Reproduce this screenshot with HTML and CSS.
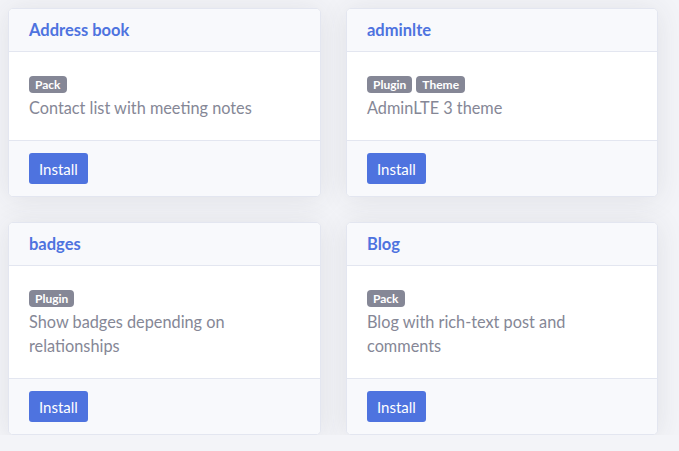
FILE: index.html
```html
<!DOCTYPE html>
<html lang="en">
<head>
  <meta charset="UTF-8" />
  <title>Extensions</title>
  <link rel="stylesheet" href="styles.css">
</head>
<body>

  <div class="grid">
    <!-- Address book -->
    <div class="card">
      <div class="card-header">Address book</div>
      <div class="card-body">
        <div class="tags"><span class="badge">Pack</span></div>
        <p>Contact list with meeting notes</p>
      </div>
      <div class="card-footer"><button class="btn">Install</button></div>
    </div>

    <!-- adminlte -->
    <div class="card">
      <div class="card-header">adminlte</div>
      <div class="card-body">
        <div class="tags"><span class="badge">Plugin</span><span class="badge">Theme</span></div>
        <p>AdminLTE 3 theme</p>
      </div>
      <div class="card-footer"><button class="btn">Install</button></div>
    </div>

    <!-- badges -->
    <div class="card">
      <div class="card-header">badges</div>
      <div class="card-body">
        <div class="tags"><span class="badge">Plugin</span></div>
        <p>Show badges depending on relationships</p>
      </div>
      <div class="card-footer"><button class="btn">Install</button></div>
    </div>

    <!-- Blog -->
    <div class="card">
      <div class="card-header">Blog</div>
      <div class="card-body">
        <div class="tags"><span class="badge">Pack</span></div>
        <p>Blog with rich-text post and comments</p>
      </div>
      <div class="card-footer"><button class="btn">Install</button></div>
    </div>
  </div>

</body>
</html>
```

FILE: styles.css
```css
/* Reset & base */
* { box-sizing: border-box; margin: 0; padding: 0; }
body {
  font-family: Lato, 'Open Sans', sans-serif;
  background: #f3f4f8;
  color: #858796;
  padding: 8px 21px 0 8px;
}

/* Card grid */
.grid {
  display: grid;
  grid-template-columns: 313px 312px;
  gap: 25px;
  align-items: start;
}

/* Card */
.card {
  background: #fff;
  border: 1px solid #e3e6f0;
  border-radius: 5px;
  box-shadow: 0 2px 28px rgba(58,59,69,0.10);
  overflow: hidden;
}
.card-header {
  height: 43px;
  padding: 0 20px;
  display: flex;
  align-items: center;
  background: #f8f9fc;
  border-bottom: 1px solid #e3e6f0;
  color: #4e73df;
  font-weight: 700;
  font-size: 16.5px;
}
.card-body {
  padding: 20px;
  font-size: 16.3px;
  line-height: 24px;
}
.card-body p { padding-right: 40px; }
.tags {
  height: 24px;
  display: flex;
  align-items: center;
  gap: 4px;
}
.badge {
  display: inline-block;
  padding: 0 6px;
  height: 17px;
  line-height: 17px;
  border-radius: 4px;
  background: #858796;
  color: #fff;
  font-size: 12px;
  font-weight: 700;
}
.card-footer {
  padding: 12px 20px;
  background: #f8f9fc;
  border-top: 1px solid #e3e6f0;
}
.btn {
  display: block;
  height: 31px;
  padding: 0 10px;
  border: none;
  border-radius: 3px;
  background: #4e73df;
  color: #fff;
  font-family: inherit;
  font-size: 15px;
  cursor: pointer;
}
```
